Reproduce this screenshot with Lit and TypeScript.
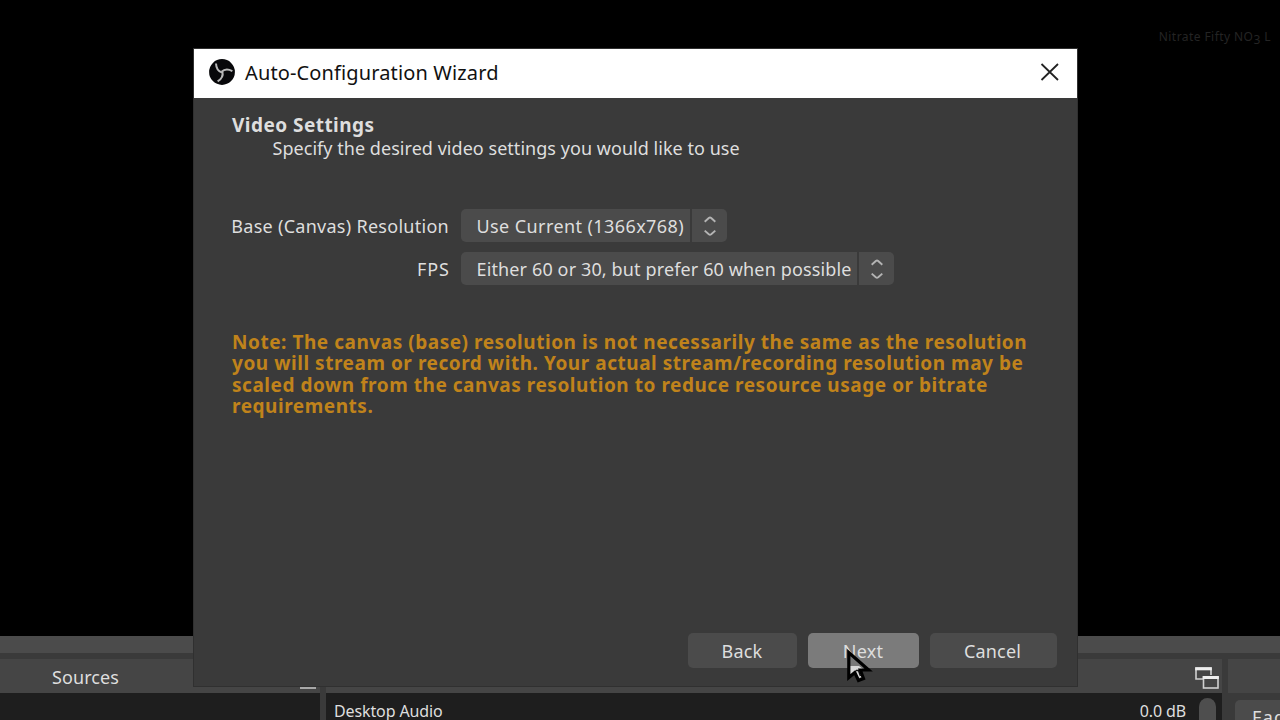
import { LitElement, html, css, svg } from "lit";
import { customElement } from "lit/decorators.js";

const chevrons = html`<svg width="14" height="24" viewBox="0 0 14 24" fill="none" stroke="#b4b4b4" stroke-width="1.9">
  <path d="M1.7 7.8 L5.8 4 Q7 3 8.2 4 L12.3 7.8"/>
  <path d="M1.7 16.6 L5.8 20.2 Q7 21.2 8.2 20.2 L12.3 16.6"/>
</svg>`;

@customElement("combo-box")
class ComboBox extends LitElement {
  static styles = css`
    :host { display: flex; height: 33px; gap: 2px; }
    .value { display: flex; align-items: center; background: #4b4b4b; border-radius: 5px 0 0 5px; padding: 1px 6px 0 15.5px; box-sizing: border-box; white-space: nowrap; flex: 1; }
    .arrow { display: flex; align-items: center; justify-content: center; width: 35px; background: #4b4b4b; border-radius: 0 5px 5px 0; }
  `;
  render() {
    return html`<div class="value"><slot></slot></div><div class="arrow">${chevrons}</div>`;
  }
}

@customElement("app-root")
class AppRoot extends LitElement {
  static styles = css`
    :host { display: block; position: relative; width: 1280px; height: 720px; overflow: hidden; background: #000; color: #dedede; font-family: "Noto Sans", "Open Sans", sans-serif; font-size: 18px; line-height: 22px; }
    * { box-sizing: border-box; }
    svg { display: block; }
    .desktop { display: grid; grid-template-rows: 636px 17px 6px 61px; height: 720px; }
    .preview { display: flex; justify-content: flex-end; padding: 26px 9px 0 0; }
    .mark { color: #242424; font-size: 12px; letter-spacing: .43px; white-space: nowrap; }
    .mark sub { font-size: 12px; line-height: 0; vertical-align: -3px; }
    .strip { background: #4b4b4b; }
    .gap { background: #3a3a3a; }
    .docks { display: grid; grid-template-columns: 320px 896px 52px; column-gap: 6px; background: #3a3a3a; }
    .head { height: 34px; background: #454545; display: flex; align-items: center; padding-top: 2px; }
    .body { height: 27px; background: #1e1e1e; }
    .sources .head { padding-left: 52px; position: relative; letter-spacing: .1px; }
    .dash { position: absolute; left: 300px; top: 27px; width: 16px; height: 3px; background: #a8a8a8; }
    .mixer .head { justify-content: flex-end; padding: 3px 3px 0 0; }
    .mixer .body { display: flex; padding: 7px 6px 0 8px; font-size: 16px; line-height: 22px; letter-spacing: -.12px; }
    .db { margin-left: auto; margin-right: 13px; }
    .scroll { width: 17px; margin-top: -2px; height: 22px; border-radius: 9px 9px 0 0; background: #4e4e4e; }
    .controls .panel { height: 27px; padding: 7px 0 0 7px; }
    .fade { height: 20px; background: #4b4b4b; border-radius: 5px 0 0 0; padding: 6px 0 0 17px; letter-spacing: 1.3px; white-space: nowrap; }
    .window { position: absolute; left: 194px; top: 49px; width: 883px; height: 637px; display: flex; flex-direction: column; background: #3a3a3a; box-shadow: 0 0 0 1px #303030; }
    .title { height: 49px; background: #fff; color: #111; display: flex; align-items: center; padding: 0 17px 3px 15px; font-size: 20px; letter-spacing: .13px; }
    .name { margin-left: 10px; flex: 1; padding-top: 2px; }
    .content { flex: 1; display: flex; flex-direction: column; padding: 16px 20px 0 38px; white-space: nowrap; }
    .h { font-size: 19px; font-weight: 700; line-height: 22px; letter-spacing: .46px; }
    .sub { padding-left: 40.5px; line-height: 24px; letter-spacing: .04px; }
    .form { display: grid; grid-template-columns: 217px max-content; column-gap: 12px; row-gap: 10px; margin-top: 49px; justify-items: start; }
    .label { justify-self: end; height: 33px; line-height: 33px; padding-top: 1px; letter-spacing: .28px; }
    .label.fps { letter-spacing: 1px; margin-right: -1px; }
    .canvas { letter-spacing: .41px; }
    .rate { letter-spacing: .13px; }
    .note { margin-top: 47px; color: #c0831b; font-size: 19px; font-weight: 700; line-height: 21.3px; letter-spacing: .54px; }
    .buttons { display: flex; justify-content: flex-end; gap: 11px; margin-top: auto; padding-bottom: 18px; }
    .btn { height: 35px; border-radius: 5px; background: #4b4b4b; display: flex; align-items: center; justify-content: center; padding-top: 1px; letter-spacing: .2px; }
    .back { width: 109px; padding-right: 1px; } .next { width: 111px; padding-right: 1px; background: #7b7b7b; } .cancel { width: 127px; padding-right: 2px; }
    .cursor { position: absolute; left: 846px; top: 648px; }
  `;
  render() {
    return html`
      <div class="desktop">
        <div class="preview"><div class="mark">Nitrate Fifty NO<sub>3</sub> L</div></div>
        <div class="strip"></div><div class="gap"></div>
        <div class="docks">
          <div class="sources"><div class="head">Sources<i class="dash"></i></div><div class="body"></div></div>
          <div class="mixer">
            <div class="head"><svg width="24" height="24" viewBox="0 0 24 24" fill="none" stroke="#d0d0d0" stroke-width="1.6"><path d="M8 13H1V2H16V9"/><path d="M0.2 2.8H16.8" stroke="#eee" stroke-width="3"/><rect x="8.5" y="11" width="14.5" height="11"/><path d="M7.7 11.5H23.8" stroke="#eee" stroke-width="3"/></svg></div>
            <div class="body"><span>Desktop Audio</span><span class="db">0.0 dB</span><div class="scroll"></div></div>
          </div>
          <div class="controls"><div class="head"></div><div class="panel"><div class="fade">Fade</div></div></div>
        </div>
      </div>
      <div class="window">
        <div class="title">
          <svg width="26" height="26" viewBox="0 0 26 26"><circle cx="13" cy="13" r="12.9" fill="#08080a"/><g fill="none" stroke="#b8b8b8" stroke-width="2">${[0, 120, 240].map((a) => svg`<path transform="rotate(${a} 13 13)" d="M13 13.5 C9.5 12.5 7.2 9.5 7 4.5"/>`)}</g></svg>
          <span class="name">Auto-Configuration Wizard</span>
          <svg width="20" height="20" viewBox="0 0 20 20" fill="none" stroke="#222" stroke-width="1.8"><path d="M1.5 2L18 18M18 2L1.5 18"/></svg>
        </div>
        <div class="content">
          <div class="h">Video Settings</div>
          <div class="sub">Specify the desired video settings you would like to use</div>
          <div class="form">
            <div class="label">Base (Canvas) Resolution</div><combo-box class="canvas">Use Current (1366x768)</combo-box>
            <div class="label fps">FPS</div><combo-box class="rate">Either 60 or 30, but prefer 60 when possible</combo-box>
          </div>
          <div class="note">
            Note: The canvas (base) resolution is not necessarily the same as the resolution<br>
            you will stream or record with. Your actual stream/recording resolution may be<br>
            scaled down from the canvas resolution to reduce resource usage or bitrate<br>
            requirements.
          </div>
          <div class="buttons"><div class="btn back">Back</div><div class="btn next">Next</div><div class="btn cancel">Cancel</div></div>
        </div>
      </div>
      <svg class="cursor" width="28" height="36" viewBox="0 0 28 36">
        <path d="M3 5V29L9 24.5L12.5 31.5L17.5 29.5L14.5 21.5H22.5Z" fill="#787878"/>
        <path d="M4 18H13L17 21H14.5L17 28.5L13 30L9 23.5L4 27Z" fill="#d8d8d8"/>
        <path d="M10 22.5L12.5 22.5L14.5 28" fill="none" stroke="#111" stroke-width="1.5"/>
        <path d="M2.8 4.5V29.5L8.8 24.5L12.5 32.5L17.5 30.5L14.3 22H22.6Z" fill="none" stroke="#000" stroke-width="3.2"/>
      </svg>
    `;
  }
}
